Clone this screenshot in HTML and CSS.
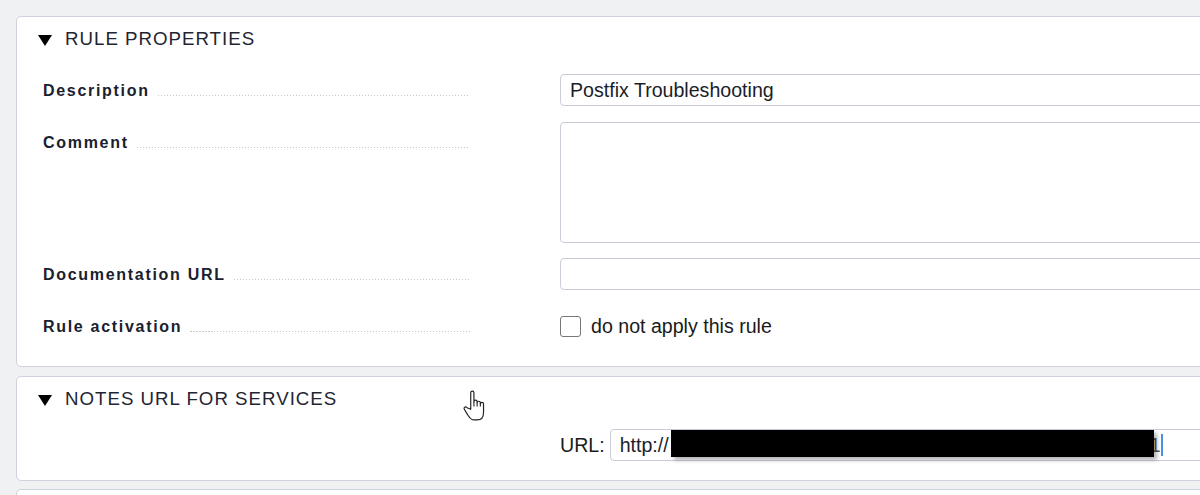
FILE: index.html
```html
<html>
<head>
  <link rel="stylesheet" href="styles.css">
</head>
<body>
  <div class="panel">
    <div class="panel-head"><span class="arrow"></span>RULE PROPERTIES</div>
    <div class="panel-body first">
      <div class="row">
        <div class="label"><span>Description</span><span class="dots"></span></div>
        <input class="field" type="text" value="Postfix Troubleshooting">
      </div>
      <div class="row top">
        <div class="label"><span>Comment</span><span class="dots"></span></div>
        <textarea class="field area"></textarea>
      </div>
      <div class="row">
        <div class="label"><span>Documentation URL</span><span class="dots"></span></div>
        <input class="field" type="text" value="">
      </div>
      <div class="row last">
        <div class="label"><span>Rule activation</span><span class="dots"></span></div>
        <label class="check"><input type="checkbox"> do not apply this rule</label>
      </div>
    </div>
  </div>

  <div class="panel notes">
    <div class="panel-head"><span class="arrow"></span>NOTES URL FOR SERVICES</div>
    <div class="panel-body second">
      <div class="row last">
        <div class="label"></div>
        <div class="url">
          <span class="url-label">URL:</span>
          <div class="field url-field">http://<span class="redact"></span><span class="tail">1</span></div>
        </div>
      </div>
    </div>
    <svg class="cursor" width="26" height="32" viewBox="0 0 22 30">
      <path d="M7 19 V3.5 a1.5 1.5 0 0 1 3 0 V12 a1.5 1.5 0 0 1 3 0 V13 a1.5 1.5 0 0 1 3 0 V14 a1.5 1.5 0 0 1 3 0 V22 c0 4 -2 7 -6 7 h-3 c-3 0 -4 -2 -6 -5 l-3 -5 c-1 -1.5 1 -3 2.5 -1.5 z" fill="#fff" stroke="#222" stroke-width="1.1" stroke-linejoin="round"/>
      <path d="M10 12 v4.5 M13 13 v3.5 M16 14 v2.5" stroke="#222" stroke-width="1" fill="none"/>
    </svg>
  </div>

  <div class="panel stub"></div>
</body>
</html>
```

FILE: styles.css
```css
html {
  background: #f0f1f3;
  overflow: hidden;
}
body {
  margin: 0;
  padding: 16px 0 0 16px;
  font-family: "Liberation Sans", Arial, sans-serif;
  color: #1e2535;
}

.panel {
  position: relative;
  width: 1230px;
  background: #fff;
  border: 1px solid #d0d1dc;
  border-radius: 5px;
  margin-bottom: 8px;
}
.panel.notes {
  margin-top: 9px;
}
.panel.stub {
  height: 40px;
}

.panel-head {
  height: 44px;
  line-height: 44px;
  padding-left: 21px;
  font-size: 18.7px;
  letter-spacing: 1px;
  color: #1f2533;
}
.arrow {
  display: inline-block;
  width: 0;
  height: 0;
  border-left: 7px solid transparent;
  border-right: 7px solid transparent;
  border-top: 11px solid #000;
  margin-right: 13px;
  vertical-align: -1px;
}

.panel-body {
  padding-left: 26px;
}
.panel-body.first {
  padding-top: 13px;
  padding-bottom: 24px;
}
.panel-body.second {
  padding-top: 8px;
  padding-bottom: 19px;
}

.row {
  display: flex;
  align-items: center;
  gap: 90px;
  margin-bottom: 16px;
}
.row.top {
  align-items: flex-start;
  margin-bottom: 15px;
}
.row.top .label {
  padding-top: 6px;
}
.row:nth-child(3) {
  margin-bottom: 20px;
}
.row.last {
  margin-bottom: 0;
}

.label {
  display: flex;
  align-items: baseline;
  flex: 0 0 427px;
  line-height: 30px;
  padding-top: 2px;
  font-size: 16px;
  font-weight: bold;
  letter-spacing: 1.7px;
  color: #19202e;
}
.dots {
  flex: 1;
  height: 1px;
  margin-left: 8px;
  background: repeating-linear-gradient(to right, #c9c9c9 0 1.5px, transparent 1.5px 3px);
}

.field {
  box-sizing: border-box;
  width: 700px;
  height: 32px;
  border: 1px solid #cccbd8;
  border-radius: 4px;
  background: #fff;
  padding: 0 9px;
  font-family: "Liberation Sans", Arial, sans-serif;
  font-size: 19.6px;
  color: #1a1d2a;
  outline: none;
}
.field.area {
  height: 121px;
  resize: none;
}

.check {
  display: flex;
  align-items: center;
  height: 32px;
  font-size: 19.6px;
  color: #1a1a1a;
}
.check input {
  appearance: none;
  width: 21px;
  height: 21px;
  margin: 0 10px 0 0;
  border: 1px solid #777;
  border-radius: 3px;
  background: #fff;
}

.url {
  display: flex;
  align-items: center;
  gap: 5px;
  font-size: 19.6px;
  color: #1a1a1a;
}
.url-field {
  display: flex;
  align-items: center;
  width: 640px;
  white-space: nowrap;
}
.redact {
  display: inline-block;
  align-self: flex-start;
  width: 483px;
  height: 27px;
  margin-left: 2px;
  background: #000;
  box-shadow: 3px 3px 4px rgba(0, 0, 0, 0.3);
  position: relative;
  z-index: 1;
}
.tail {
  margin-left: -4px;
  color: #555;
  border-right: 2px solid #4a90e2;
  line-height: 22px;
}

.cursor {
  position: absolute;
  left: 445px;
  top: 12px;
}
```
